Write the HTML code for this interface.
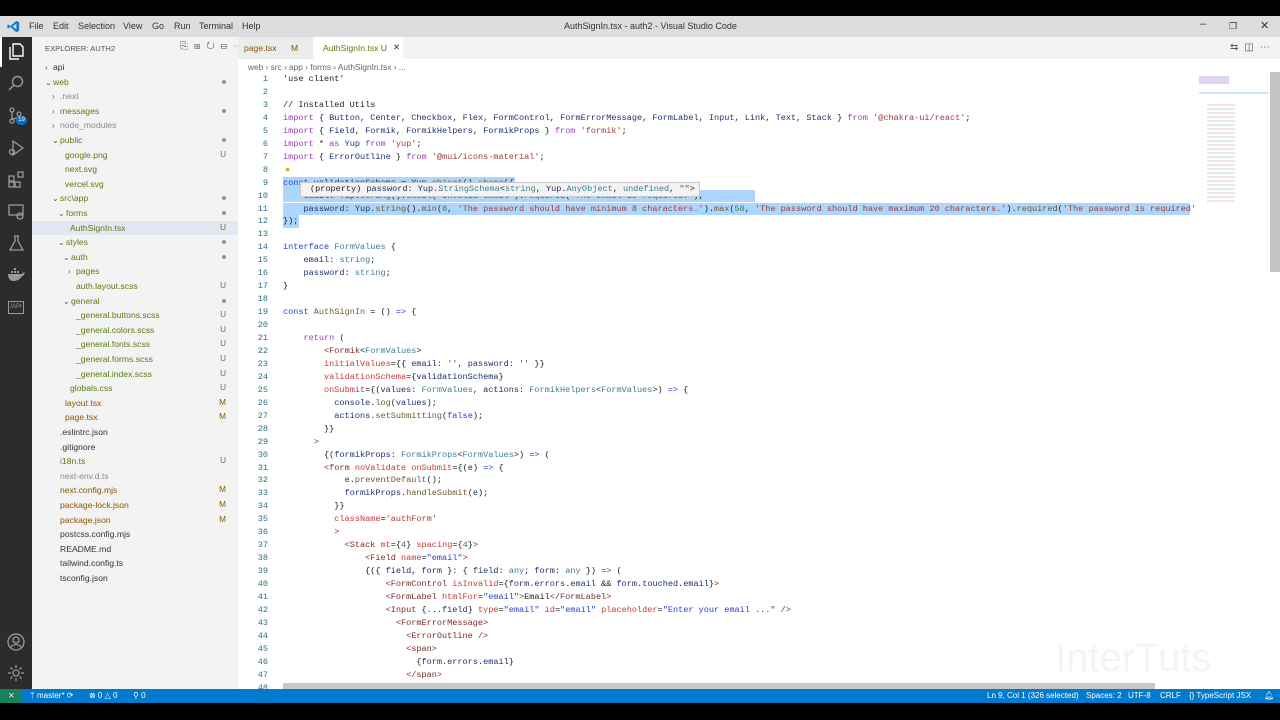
<!DOCTYPE html>
<html><head><meta charset="utf-8"><style>
*{margin:0;padding:0;box-sizing:border-box}
body{width:1280px;height:720px;overflow:hidden;background:#000;font-family:"Liberation Sans",sans-serif;position:relative}
.abs{position:absolute}
#title{left:0;top:16px;width:1280px;height:21px;background:#dddddd;font-size:9px;color:#333}
#title span{position:absolute;top:5px}
#act{left:0;top:37px;width:32px;height:652px;background:#2c2c2c}
#side{left:32px;top:37px;width:206px;height:652px;background:#f3f3f3;font-size:8.6px;color:#333}
.row{position:absolute;left:0;width:206px;height:14.6px;line-height:14.6px;white-space:nowrap}
.row .b{position:absolute;right:12px;top:0;font-size:8.2px}
.dot{position:absolute;right:12px;top:5px;width:4px;height:4px;border-radius:50%;background:#8a9a80}
.g{color:#587c0c}.m{color:#895503}.gr{color:#8c8c8c}
.chev{display:inline-block;width:8px;color:#555;font-size:8px}
#ed{left:238px;top:37px;width:1042px;height:652px;background:#fff}
#tabs{left:238px;top:37px;width:1042px;height:22px;background:#f3f3f3;font-size:8.6px}
#code{left:238px;top:73px;width:1042px;height:616px;overflow:hidden;font-family:"Liberation Mono",monospace;font-size:8.55px;}
.ln{position:absolute;left:0;width:1042px;height:12.95px;line-height:12.95px;white-space:pre}
.ln .n{position:absolute;left:0;width:30px;text-align:right;color:#2b6f83}
.ln .c{position:absolute;left:45px;color:#222}
.k{color:#9a3fb0}.s{color:#a33a3a}.t{color:#7a2a2a}.a{color:#c83a3a}.ty{color:#3a7f90}.f{color:#6e5a2e}.v{color:#203070}.bl{color:#2a3fd0}.cm{color:#444}.nu{color:#2a7a58}
.sel{position:absolute;background:#add6ff;height:12.95px}
#status{left:0;top:689px;width:1280px;height:14px;background:#007acc;color:#fff;font-size:8px}
#status span{position:absolute;top:2px}
</style></head><body>
<div class="abs" id="title">
<svg class="abs" style="left:7px;top:4px" width="13" height="13" viewBox="0 0 16 16"><path d="M11.5 1 L15 2.7 V13.3 L11.5 15 L4 8.5 L1.5 10.5 L0.5 10 V6 L1.5 5.5 L4 7.5 Z M11.5 4.5 L7 8 L11.5 11.5 Z" fill="#1a7ac7"/></svg>
<span style="left:29px">File</span><span style="left:53px">Edit</span><span style="left:78px">Selection</span><span style="left:123px">View</span><span style="left:152px">Go</span><span style="left:174px">Run</span><span style="left:199px">Terminal</span><span style="left:242px">Help</span>
<span style="left:564px">AuthSignIn.tsx - auth2 - Visual Studio Code</span>
<span style="left:1200px;top:2px;font-size:11px">–</span><span style="left:1229px;font-size:9px">❐</span><span style="left:1260px;top:3px;font-size:11px">✕</span>
</div>
<div class="abs" id="act">
<div class="abs" style="left:0;top:0;width:2px;height:30px;background:#fff"></div>
<svg class="abs" style="left:8px;top:6px" width="17" height="17" viewBox="0 0 17 17" fill="none" stroke="#fff" stroke-width="1.4"><path d="M5 1h7l3 3v9H5z M2 4v12h9"/></svg>
<svg class="abs" style="left:8px;top:38px" width="16" height="16" viewBox="0 0 16 16" fill="none" stroke="#9a9a9a" stroke-width="1.4"><circle cx="9.5" cy="6.5" r="5"/><path d="M6 10l-5 5"/></svg>
<svg class="abs" style="left:8px;top:70px" width="16" height="18" viewBox="0 0 16 18" fill="none" stroke="#9a9a9a" stroke-width="1.3"><circle cx="4" cy="3" r="2"/><circle cx="4" cy="14" r="2"/><circle cx="11" cy="7" r="2"/><path d="M4 5v7M11 9c0 3-7 2-7 4"/></svg>
<div class="abs" style="left:16px;top:79px;width:11px;height:9px;border-radius:5px;background:#0a6ec4;color:#fff;font-size:6px;text-align:center;line-height:9px">19</div>
<svg class="abs" style="left:8px;top:102px" width="17" height="17" viewBox="0 0 17 17" fill="none" stroke="#9a9a9a" stroke-width="1.3"><path d="M5 2l10 7-10 7z"/><circle cx="4" cy="13" r="2.5"/></svg>
<svg class="abs" style="left:8px;top:134px" width="17" height="17" viewBox="0 0 17 17" fill="none" stroke="#9a9a9a" stroke-width="1.3"><rect x="1" y="5" width="5" height="5"/><rect x="1" y="11" width="5" height="5"/><rect x="7" y="11" width="5" height="5"/><rect x="10" y="1" width="5" height="5"/></svg>
<svg class="abs" style="left:8px;top:166px" width="17" height="17" viewBox="0 0 17 17" fill="none" stroke="#9a9a9a" stroke-width="1.3"><rect x="1" y="2" width="14" height="10"/><circle cx="12" cy="13" r="3"/></svg>
<svg class="abs" style="left:9px;top:198px" width="15" height="16" viewBox="0 0 15 16" fill="none" stroke="#9a9a9a" stroke-width="1.3"><path d="M5 1h5M6 1v5L1 15h13L9 6V1"/></svg>
<svg class="abs" style="left:7px;top:231px" width="18" height="14" viewBox="0 0 18 14" fill="#9a9a9a"><path d="M1 6h14c1-2 2-2 3-1-1 1-1 3-3 3C13 12 9 13 6 13 3 13 1 10 1 6z"/><rect x="4" y="3" width="2" height="2"/><rect x="7" y="3" width="2" height="2"/><rect x="10" y="3" width="2" height="2"/><rect x="7" y="0" width="2" height="2"/></svg>
<div class="abs" style="left:8px;top:264px;width:16px;height:13px;border:1.3px solid #9a9a9a;color:#9a9a9a;font-size:6px;text-align:center;line-height:11px">/API</div>
<svg class="abs" style="left:7px;top:596px" width="18" height="18" viewBox="0 0 18 18" fill="none" stroke="#9a9a9a" stroke-width="1.3"><circle cx="9" cy="9" r="8"/><circle cx="9" cy="7" r="3"/><path d="M3.5 14.5c3-4 8-4 11 0"/></svg>
<svg class="abs" style="left:7px;top:627px" width="18" height="18" viewBox="0 0 18 18" fill="none" stroke="#9a9a9a" stroke-width="1.3"><circle cx="9" cy="9" r="3"/><path d="M9 1v3M9 14v3M1 9h3M14 9h3M3.3 3.3l2.1 2.1M12.6 12.6l2.1 2.1M3.3 14.7l2.1-2.1M12.6 5.4l2.1-2.1"/></svg>
</div>
<div class="abs" id="side">
<div class="abs" style="left:13px;top:7px;font-size:7.6px;color:#555">EXPLORER: AUTH2</div>
<div class="abs" style="left:148px;top:4px;font-size:10px;color:#555;letter-spacing:6px">⎘⊞↻⊟⋯</div>
<div style="position:absolute;top:23px;left:0;width:206px">
<div class="row" style="top:0;padding-left:13px"><span class="chev">›</span>api</div>
<div class="row g" style="top:14.6px;padding-left:13px"><span class="chev">⌄</span>web<i class="dot"></i></div>
<div class="row gr" style="top:29.2px;padding-left:20px"><span class="chev">›</span>.next</div>
<div class="row g" style="top:43.8px;padding-left:20px"><span class="chev">›</span>messages<i class="dot"></i></div>
<div class="row gr" style="top:58.4px;padding-left:20px"><span class="chev">›</span>node_modules</div>
<div class="row g" style="top:73px;padding-left:20px"><span class="chev">⌄</span>public<i class="dot"></i></div>
<div class="row g" style="top:87.6px;padding-left:33px">google.png<span class="b">U</span></div>
<div class="row g" style="top:102.2px;padding-left:33px">next.svg</div>
<div class="row g" style="top:116.8px;padding-left:33px">vercel.svg</div>
<div class="row g" style="top:131.4px;padding-left:20px"><span class="chev">⌄</span>src\app<i class="dot"></i></div>
<div class="row g" style="top:146px;padding-left:26px"><span class="chev">⌄</span>forms<i class="dot"></i></div>
<div class="row g" style="top:160.6px;padding-left:38px;background:#e4e6f1">AuthSignIn.tsx<span class="b">U</span></div>
<div class="row g" style="top:175.2px;padding-left:26px"><span class="chev">⌄</span>styles<i class="dot"></i></div>
<div class="row g" style="top:189.8px;padding-left:31px"><span class="chev">⌄</span>auth<i class="dot"></i></div>
<div class="row g" style="top:204.4px;padding-left:36px"><span class="chev">›</span>pages</div>
<div class="row g" style="top:219px;padding-left:44px">auth.layout.scss<span class="b">U</span></div>
<div class="row g" style="top:233.6px;padding-left:31px"><span class="chev">⌄</span>general<i class="dot"></i></div>
<div class="row g" style="top:248.2px;padding-left:44px">_general.buttons.scss<span class="b">U</span></div>
<div class="row g" style="top:262.8px;padding-left:44px">_general.colors.scss<span class="b">U</span></div>
<div class="row g" style="top:277.4px;padding-left:44px">_general.fonts.scss<span class="b">U</span></div>
<div class="row g" style="top:292px;padding-left:44px">_general.forms.scss<span class="b">U</span></div>
<div class="row g" style="top:306.6px;padding-left:44px">_general.index.scss<span class="b">U</span></div>
<div class="row g" style="top:321.2px;padding-left:38px">globals.css<span class="b">U</span></div>
<div class="row m" style="top:335.8px;padding-left:33px">layout.tsx<span class="b">M</span></div>
<div class="row m" style="top:350.4px;padding-left:33px">page.tsx<span class="b">M</span></div>
<div class="row" style="top:365px;padding-left:28px">.eslintrc.json</div>
<div class="row" style="top:379.6px;padding-left:28px">.gitignore</div>
<div class="row g" style="top:394.2px;padding-left:28px">i18n.ts<span class="b">U</span></div>
<div class="row gr" style="top:408.8px;padding-left:28px">next-env.d.ts</div>
<div class="row m" style="top:423.4px;padding-left:28px">next.config.mjs<span class="b">M</span></div>
<div class="row m" style="top:438px;padding-left:28px">package-lock.json<span class="b">M</span></div>
<div class="row m" style="top:452.6px;padding-left:28px">package.json<span class="b">M</span></div>
<div class="row" style="top:467.2px;padding-left:28px">postcss.config.mjs</div>
<div class="row" style="top:481.8px;padding-left:28px">README.md</div>
<div class="row" style="top:496.4px;padding-left:28px">tailwind.config.ts</div>
<div class="row" style="top:511px;padding-left:28px">tsconfig.json</div>
</div>
</div>
<div class="abs" id="ed"></div>
<div class="abs" id="tabs">
<div class="abs" style="left:0;top:0;width:75px;height:22px;background:#ececec"><span class="abs m" style="left:6px;top:6px">page.tsx</span><span class="abs m" style="left:53px;top:6px">M</span></div>
<div class="abs" style="left:75px;top:0;width:90px;height:22px;background:#fff"><span class="abs g" style="left:10px;top:6px">AuthSignIn.tsx U</span><span class="abs" style="left:80px;top:5px;color:#333">✕</span></div>
<div class="abs" style="left:992px;top:5px;color:#555;font-size:10px;letter-spacing:6px">⇆◫⋯</div>
</div>
<div class="abs" style="left:248px;top:62px;font-size:8.3px;color:#666">web › src › app › forms › AuthSignIn.tsx › ...</div>
<div class="abs" style="left:1197px;top:74px;width:72px;height:130px">
<div class="abs" style="left:2px;top:2px;width:30px;height:8px;background:#e2d4ee"></div>
<div class="abs" style="left:2px;top:18px;width:70px;height:2px;background:#cfe4f8"></div>
<div class="abs" style="left:10px;top:30px;width:28px;height:100px;background:repeating-linear-gradient(#f2d6d6 0 2px,#fff 2px 4px,#d6e4ec 4px 6px,#fff 6px 8px);opacity:.7"></div>
</div>
<div class="abs" style="left:1270px;top:72px;width:10px;height:200px;background:#c4c4c4"></div>
<div class="abs" id="code">
<div class="sel" style="left:45px;top:103.6px;width:232px"></div>
<div class="sel" style="left:45px;top:116.55px;width:472px"></div>
<div class="sel" style="left:45px;top:129.5px;width:907px"></div>
<div class="sel" style="left:45px;top:142.45px;width:16px"></div>
<div class="ln" style="top:0"><span class="n">1</span><span class="c s">'use client'</span></div>
<div class="ln" style="top:12.95px"><span class="n">2</span></div>
<div class="ln" style="top:25.9px"><span class="n">3</span><span class="c cm">// Installed Utils</span></div>
<div class="ln" style="top:38.85px"><span class="n">4</span><span class="c"><span class="k">import</span> { <span class="v">Button</span>, <span class="v">Center</span>, <span class="v">Checkbox</span>, <span class="v">Flex</span>, <span class="v">FormControl</span>, <span class="v">FormErrorMessage</span>, <span class="v">FormLabel</span>, <span class="v">Input</span>, <span class="v">Link</span>, <span class="v">Text</span>, <span class="v">Stack</span> } <span class="k">from</span> <span class="s">'@chakra-ui/react'</span>;</span></div>
<div class="ln" style="top:51.8px"><span class="n">5</span><span class="c"><span class="k">import</span> { <span class="v">Field</span>, <span class="v">Formik</span>, <span class="v">FormikHelpers</span>, <span class="v">FormikProps</span> } <span class="k">from</span> <span class="s">'formik'</span>;</span></div>
<div class="ln" style="top:64.75px"><span class="n">6</span><span class="c"><span class="k">import</span> * <span class="k">as</span> <span class="v">Yup</span> <span class="k">from</span> <span class="s">'yup'</span>;</span></div>
<div class="ln" style="top:77.7px"><span class="n">7</span><span class="c"><span class="k">import</span> { <span class="v">ErrorOutline</span> } <span class="k">from</span> <span class="s">'@mui/icons-material'</span>;</span></div>
<div class="ln" style="top:90.65px"><span class="n">8</span><span class="c" style="color:#e0b000;left:47px">●</span></div>
<div class="ln" style="top:103.6px"><span class="n">9</span><span class="c"><span class="bl">const</span> <span class="v">validationSchema</span> = <span class="v">Yup</span>.<span class="f">object</span>().<span class="f">shape</span>({</span></div>
<div class="ln" style="top:116.55px"><span class="n">10</span><span class="c">    <span class="v">email</span>: <span class="v">Yup</span>.<span class="f">string</span>().<span class="f">email</span>(<span class="s">'Invalid email'</span>).<span class="f">required</span>(<span class="s">'The email is required.'</span>),</span></div>
<div class="ln" style="top:129.5px"><span class="n">11</span><span class="c">    <span class="v">password</span>: <span class="v">Yup</span>.<span class="f">string</span>().<span class="f">min</span>(<span class="nu">8</span>, <span class="s">'The password should have minimum 8 characters.'</span>).<span class="f">max</span>(<span class="nu">50</span>, <span class="s">'The password should have maximum 20 characters.'</span>).<span class="f">required</span>(<span class="s">'The password is required'</span></span></div>
<div class="ln" style="top:142.45px"><span class="n">12</span><span class="c">});</span></div>
<div class="ln" style="top:155.4px"><span class="n">13</span></div>
<div class="ln" style="top:168.35px"><span class="n">14</span><span class="c"><span class="bl">interface</span> <span class="ty">FormValues</span> {</span></div>
<div class="ln" style="top:181.3px"><span class="n">15</span><span class="c">    <span class="v">email</span>: <span class="ty">string</span>;</span></div>
<div class="ln" style="top:194.25px"><span class="n">16</span><span class="c">    <span class="v">password</span>: <span class="ty">string</span>;</span></div>
<div class="ln" style="top:207.2px"><span class="n">17</span><span class="c">}</span></div>
<div class="ln" style="top:220.15px"><span class="n">18</span></div>
<div class="ln" style="top:233.1px"><span class="n">19</span><span class="c"><span class="bl">const</span> <span class="f">AuthSignIn</span> = () <span class="bl">=&gt;</span> {</span></div>
<div class="ln" style="top:246.05px"><span class="n">20</span></div>
<div class="ln" style="top:259px"><span class="n">21</span><span class="c">    <span class="k">return</span> (</span></div>
<div class="ln" style="top:271.95px"><span class="n">22</span><span class="c">        <span class="t">&lt;Formik</span>&lt;<span class="ty">FormValues</span>&gt;</span></div>
<div class="ln" style="top:284.9px"><span class="n">23</span><span class="c">        <span class="a">initialValues</span>={{ <span class="v">email</span>: <span class="s">''</span>, <span class="v">password</span>: <span class="s">''</span> }}</span></div>
<div class="ln" style="top:297.85px"><span class="n">24</span><span class="c">        <span class="a">validationSchema</span>={<span class="v">validationSchema</span>}</span></div>
<div class="ln" style="top:310.8px"><span class="n">25</span><span class="c">        <span class="a">onSubmit</span>={(<span class="v">values</span>: <span class="ty">FormValues</span>, <span class="v">actions</span>: <span class="ty">FormikHelpers</span>&lt;<span class="ty">FormValues</span>&gt;) <span class="bl">=&gt;</span> {</span></div>
<div class="ln" style="top:323.75px"><span class="n">26</span><span class="c">          <span class="v">console</span>.<span class="f">log</span>(<span class="v">values</span>);</span></div>
<div class="ln" style="top:336.7px"><span class="n">27</span><span class="c">          <span class="v">actions</span>.<span class="f">setSubmitting</span>(<span class="bl">false</span>);</span></div>
<div class="ln" style="top:349.65px"><span class="n">28</span><span class="c">        }}</span></div>
<div class="ln" style="top:362.6px"><span class="n">29</span><span class="c">      <span class="t">&gt;</span></span></div>
<div class="ln" style="top:375.55px"><span class="n">30</span><span class="c">        {(<span class="v">formikProps</span>: <span class="ty">FormikProps</span>&lt;<span class="ty">FormValues</span>&gt;) <span class="bl">=&gt;</span> (</span></div>
<div class="ln" style="top:388.5px"><span class="n">31</span><span class="c">        <span class="t">&lt;form</span> <span class="a">noValidate</span> <span class="a">onSubmit</span>={(<span class="v">e</span>) <span class="bl">=&gt;</span> {</span></div>
<div class="ln" style="top:401.45px"><span class="n">32</span><span class="c">            <span class="v">e</span>.<span class="f">preventDefault</span>();</span></div>
<div class="ln" style="top:414.4px"><span class="n">33</span><span class="c">            <span class="v">formikProps</span>.<span class="f">handleSubmit</span>(<span class="v">e</span>);</span></div>
<div class="ln" style="top:427.35px"><span class="n">34</span><span class="c">          }}</span></div>
<div class="ln" style="top:440.3px"><span class="n">35</span><span class="c">          <span class="a">className</span>=<span class="s">'authForm'</span></span></div>
<div class="ln" style="top:453.25px"><span class="n">36</span><span class="c">          <span class="t">&gt;</span></span></div>
<div class="ln" style="top:466.2px"><span class="n">37</span><span class="c">            <span class="t">&lt;Stack</span> <span class="a">mt</span>={<span class="nu">4</span>} <span class="a">spacing</span>={<span class="nu">4</span>}<span class="t">&gt;</span></span></div>
<div class="ln" style="top:479.15px"><span class="n">38</span><span class="c">                <span class="t">&lt;Field</span> <span class="a">name</span>=<span class="bl">"email"</span><span class="t">&gt;</span></span></div>
<div class="ln" style="top:492.1px"><span class="n">39</span><span class="c">                {({ <span class="v">field</span>, <span class="v">form</span> }: { <span class="v">field</span>: <span class="ty">any</span>; <span class="v">form</span>: <span class="ty">any</span> }) <span class="bl">=&gt;</span> (</span></div>
<div class="ln" style="top:505.05px"><span class="n">40</span><span class="c">                    <span class="t">&lt;FormControl</span> <span class="a">isInvalid</span>={<span class="v">form</span>.<span class="v">errors</span>.<span class="v">email</span> &amp;&amp; <span class="v">form</span>.<span class="v">touched</span>.<span class="v">email</span>}<span class="t">&gt;</span></span></div>
<div class="ln" style="top:518px"><span class="n">41</span><span class="c">                    <span class="t">&lt;FormLabel</span> <span class="a">htmlFor</span>=<span class="bl">"email"</span><span class="t">&gt;</span>Email<span class="t">&lt;/FormLabel&gt;</span></span></div>
<div class="ln" style="top:530.95px"><span class="n">42</span><span class="c">                    <span class="t">&lt;Input</span> {...<span class="v">field</span>} <span class="a">type</span>=<span class="bl">"email"</span> <span class="a">id</span>=<span class="bl">"email"</span> <span class="a">placeholder</span>=<span class="bl">"Enter your email ..."</span> <span class="t">/&gt;</span></span></div>
<div class="ln" style="top:543.9px"><span class="n">43</span><span class="c">                      <span class="t">&lt;FormErrorMessage&gt;</span></span></div>
<div class="ln" style="top:556.85px"><span class="n">44</span><span class="c">                        <span class="t">&lt;ErrorOutline /&gt;</span></span></div>
<div class="ln" style="top:569.8px"><span class="n">45</span><span class="c">                        <span class="t">&lt;span&gt;</span></span></div>
<div class="ln" style="top:582.75px"><span class="n">46</span><span class="c">                          {<span class="v">form</span>.<span class="v">errors</span>.<span class="v">email</span>}</span></div>
<div class="ln" style="top:595.7px"><span class="n">47</span><span class="c">                        <span class="t">&lt;/span&gt;</span></span></div>
<div class="ln" style="top:608.65px"><span class="n">48</span><span class="c">                      <span class="t">&lt;/FormErrorMessage&gt;</span></span></div>
<div class="ln" style="top:621.6px"><span class="n">49</span><span class="c">                    <span class="t">&lt;/FormControl&gt;</span></span></div>
</div>
<div class="abs" style="left:283px;top:683px;width:872px;height:6px;background:#c8c8c8"></div>
<div class="abs" style="left:300px;top:182px;width:400px;height:15px;background:#f3f3f3;border:1px solid #c8c8c8;font-family:'Liberation Mono',monospace;font-size:8.55px;line-height:13px;padding-left:9px;white-space:pre;color:#222">(property) <span class="v">password</span>: <span class="v">Yup</span>.<span class="ty">StringSchema</span>&lt;<span class="ty">string</span>, <span class="v">Yup</span>.<span class="ty">AnyObject</span>, <span class="ty">undefined</span>, <span class="s">""</span>&gt;</div>
<div class="abs" style="left:1055px;top:636px;font-size:40px;color:#f4f4f4;font-family:'Liberation Sans',sans-serif">InterTuts</div>
<div class="abs" id="status">
<div class="abs" style="left:0;top:0;width:22px;height:14px;background:#16825d"></div>
<span style="left:8px">⨯</span>
<span style="left:30px">ᛘ master* ⟳</span><span style="left:89px">⊗ 0 △ 0</span><span style="left:133px">⚲ 0</span>
<span style="left:987px">Ln 9, Col 1 (326 selected)</span><span style="left:1086px">Spaces: 2</span><span style="left:1128px">UTF-8</span><span style="left:1160px">CRLF</span><span style="left:1189px">{} TypeScript JSX</span><span style="left:1264px">🔔︎</span>
</div>
</body></html>
